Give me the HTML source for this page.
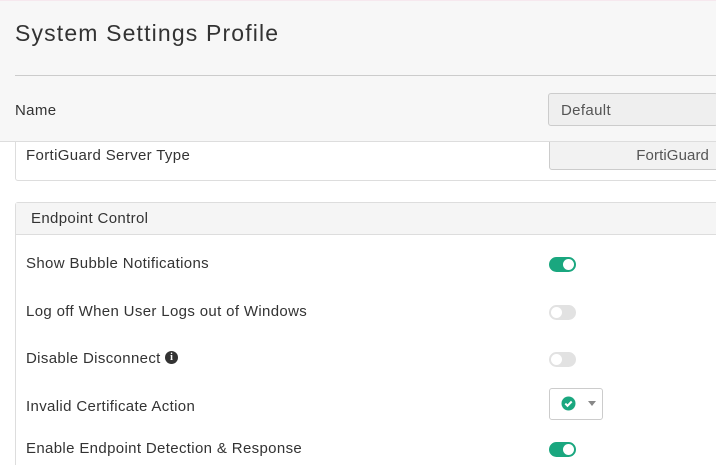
<!DOCTYPE html>
<html><head><style>
html,body{margin:0;width:716px;height:465px;overflow:hidden}
body{background:#fff;font-family:"Liberation Sans",sans-serif;color:#333;position:relative}
.a{position:absolute}
.hdr{left:0;top:0;width:716px;height:140px;background:#f7f7f7;border-bottom:1px solid #ddd;z-index:2;border-top:1px solid #f6e8ee}
.t{font-size:15px;letter-spacing:0.35px;white-space:nowrap}
.tog{width:27px;height:15px;border-radius:8px;left:549px}
.tog::after{content:"";position:absolute;top:2px;width:11px;height:11px;border-radius:50%;background:#fff}
.on{background:#1aa77f}.on::after{right:2px}
.off{background:#e2e2e2}.off::after{left:2px}
</style></head><body>
<div class="a hdr">
 <div class="a" style="left:15px;top:19px;font-size:23px;letter-spacing:1.15px;color:#333">System Settings Profile</div>
 <div class="a" style="left:15px;top:74px;width:701px;height:1px;background:#ccc"></div>
 <div class="a t" style="left:15px;top:101px">Name</div>
 <div class="a" style="left:548px;top:92px;width:170px;height:33px;box-sizing:border-box;border:1px solid #ccc;border-radius:3px;background:#efefef"></div>
 <div class="a t" style="left:561px;top:101px;color:#555">Default</div>
</div>
<div class="a" style="left:15px;top:130px;width:710px;height:51px;border:1px solid #ddd;border-radius:3px;box-sizing:border-box"></div>
<div class="a t" style="left:26px;top:147px">FortiGuard Server Type</div>
<div class="a" style="left:549px;top:130px;width:170px;height:40px;box-sizing:border-box;border:1px solid #ccc;border-radius:3px;background:#f2f2f2"></div>
<div class="a t" style="right:7px;top:147px;color:#555;letter-spacing:0.1px">FortiGuard</div>
<div class="a" style="left:15px;top:202px;width:710px;height:280px;border:1px solid #ddd;border-radius:3px;box-sizing:border-box"></div>
<div class="a" style="left:16px;top:203px;width:700px;height:31px;background:#f5f5f5;border-bottom:1px solid #ddd"></div>
<div class="a t" style="left:31px;top:210px">Endpoint Control</div>
<div class="a t" style="left:26px;top:255px">Show Bubble Notifications</div>
<div class="a tog on" style="top:257px"></div>
<div class="a t" style="left:26px;top:303px">Log off When User Logs out of Windows</div>
<div class="a tog off" style="top:305px"></div>
<div class="a t" style="left:26px;top:350px">Disable Disconnect</div>
<span class="a" style="left:165px;top:351px;width:13px;height:13px;border-radius:50%;background:#333;color:#fff;font-size:10px;font-weight:bold;text-align:center;line-height:13px;font-family:'Liberation Serif',serif">i</span>
<div class="a tog off" style="top:352px"></div>
<div class="a t" style="left:26px;top:398px">Invalid Certificate Action</div>
<div class="a" style="left:549px;top:388px;width:54px;height:32px;box-sizing:border-box;border:1px solid #ccc;border-radius:3px"></div>
<svg class="a" style="left:561px;top:396px" width="15" height="15" viewBox="0 0 15 15"><circle cx="7.5" cy="7.5" r="7" fill="#1aa77f"/><path d="M4.3 7.6l2.2 2.2 4.2-4.3" stroke="#fff" stroke-width="2" fill="none"/></svg>
<div class="a" style="left:588px;top:401px;width:0;height:0;border-left:4px solid transparent;border-right:4px solid transparent;border-top:5px solid #888"></div>
<div class="a t" style="left:26px;top:440px">Enable Endpoint Detection &amp; Response</div>
<div class="a tog on" style="top:442px"></div>
</body></html>
